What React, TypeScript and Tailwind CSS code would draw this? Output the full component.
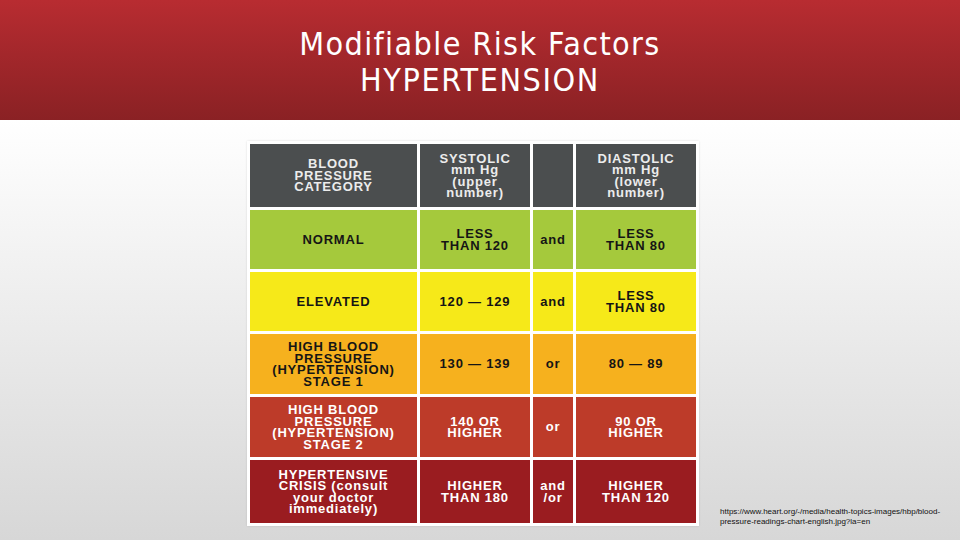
import React from "react";

type Row = {
  bg: string;
  text: string;
  cells: React.ReactNode[];
  h: string;
};

const cellFont =
  "font-['Liberation_Sans',Arial,sans-serif] font-bold text-[13px] leading-[11.5px] tracking-[0.8px] text-center";

const rows: Row[] = [
  {
    bg: "bg-[#a5c93c]",
    text: "text-[#151515]",
    h: "h-[59px]",
    cells: ["NORMAL", <>LESS<br />THAN 120</>, "and", <>LESS<br />THAN 80</>],
  },
  {
    bg: "bg-[#f6e919]",
    text: "text-[#151515]",
    h: "h-[59px]",
    cells: ["ELEVATED", "120 — 129", "and", <>LESS<br />THAN 80</>],
  },
  {
    bg: "bg-[#f6b11e]",
    text: "text-[#151515]",
    h: "h-[60px]",
    cells: [
      <>HIGH BLOOD<br />PRESSURE<br />(HYPERTENSION)<br />STAGE 1</>,
      "130 — 139",
      "or",
      "80 — 89",
    ],
  },
  {
    bg: "bg-[#bd3b29]",
    text: "text-white",
    h: "h-[60px]",
    cells: [
      <>HIGH BLOOD<br />PRESSURE<br />(HYPERTENSION)<br />STAGE 2</>,
      <>140 OR<br />HIGHER</>,
      "or",
      <>90 OR<br />HIGHER</>,
    ],
  },
  {
    bg: "bg-[#9a1c20]",
    text: "text-white",
    h: "h-[63px]",
    cells: [
      <>HYPERTENSIVE<br />CRISIS (consult<br />your doctor<br />immediately)</>,
      <>HIGHER<br />THAN 180</>,
      <>and<br />/or</>,
      <>HIGHER<br />THAN 120</>,
    ],
  },
];

const headers: React.ReactNode[] = [
  <>BLOOD<br />PRESSURE<br />CATEGORY</>,
  <>SYSTOLIC<br />mm Hg<br />(upper<br />number)</>,
  "",
  <>DIASTOLIC<br />mm Hg<br />(lower<br />number)</>,
];

function Cell({ children, className }: { children: React.ReactNode; className: string }) {
  return (
    <div className={`flex items-center justify-center ${cellFont} ${className}`}>
      <div>{children}</div>
    </div>
  );
}

function Chart() {
  return (
    <div className="bg-white p-[3px] shadow-[0_0_2px_rgba(0,0,0,0.12)]">
      <div className="grid grid-cols-[167px_110px_40px_120px] gap-[3px]">
        {headers.map((h, i) => (
          <Cell key={`h${i}`} className="h-[63px] bg-[#4b4e4f] text-[#ececec]">
            {h}
          </Cell>
        ))}
        {rows.map((r, ri) =>
          r.cells.map((c, ci) => (
            <Cell key={`${ri}-${ci}`} className={`${r.h} ${r.bg} ${r.text}`}>
              {c}
            </Cell>
          ))
        )}
      </div>
    </div>
  );
}

export default function App() {
  return (
    <div className="flex h-[540px] w-[960px] flex-col overflow-hidden">
      <header className="flex h-[120px] flex-col items-center justify-center bg-gradient-to-b from-[#b82c31] to-[#8a2124] pt-[4px] font-['DejaVu_Sans_Condensed',sans-serif] text-[32px] leading-[36px] text-white">
        <h1 className="tracking-[1.4px]">Modifiable Risk Factors</h1>
        <h2 className="tracking-[1.6px]">HYPERTENSION</h2>
      </header>

      <main className="flex flex-1 items-start bg-gradient-to-b from-white to-[#d7d7d7] pl-[247px] pt-[21px]">
        <Chart />
        <p className="mb-[13px] ml-[21px] w-[235px] self-end font-['Liberation_Sans',Arial,sans-serif] text-[8px] leading-[10px] text-[#111]">
          https://www.heart.org/-/media/health-topics-images/hbp/blood-
          <br />
          pressure-readings-chart-english.jpg?la=en
        </p>
      </main>
    </div>
  );
}
